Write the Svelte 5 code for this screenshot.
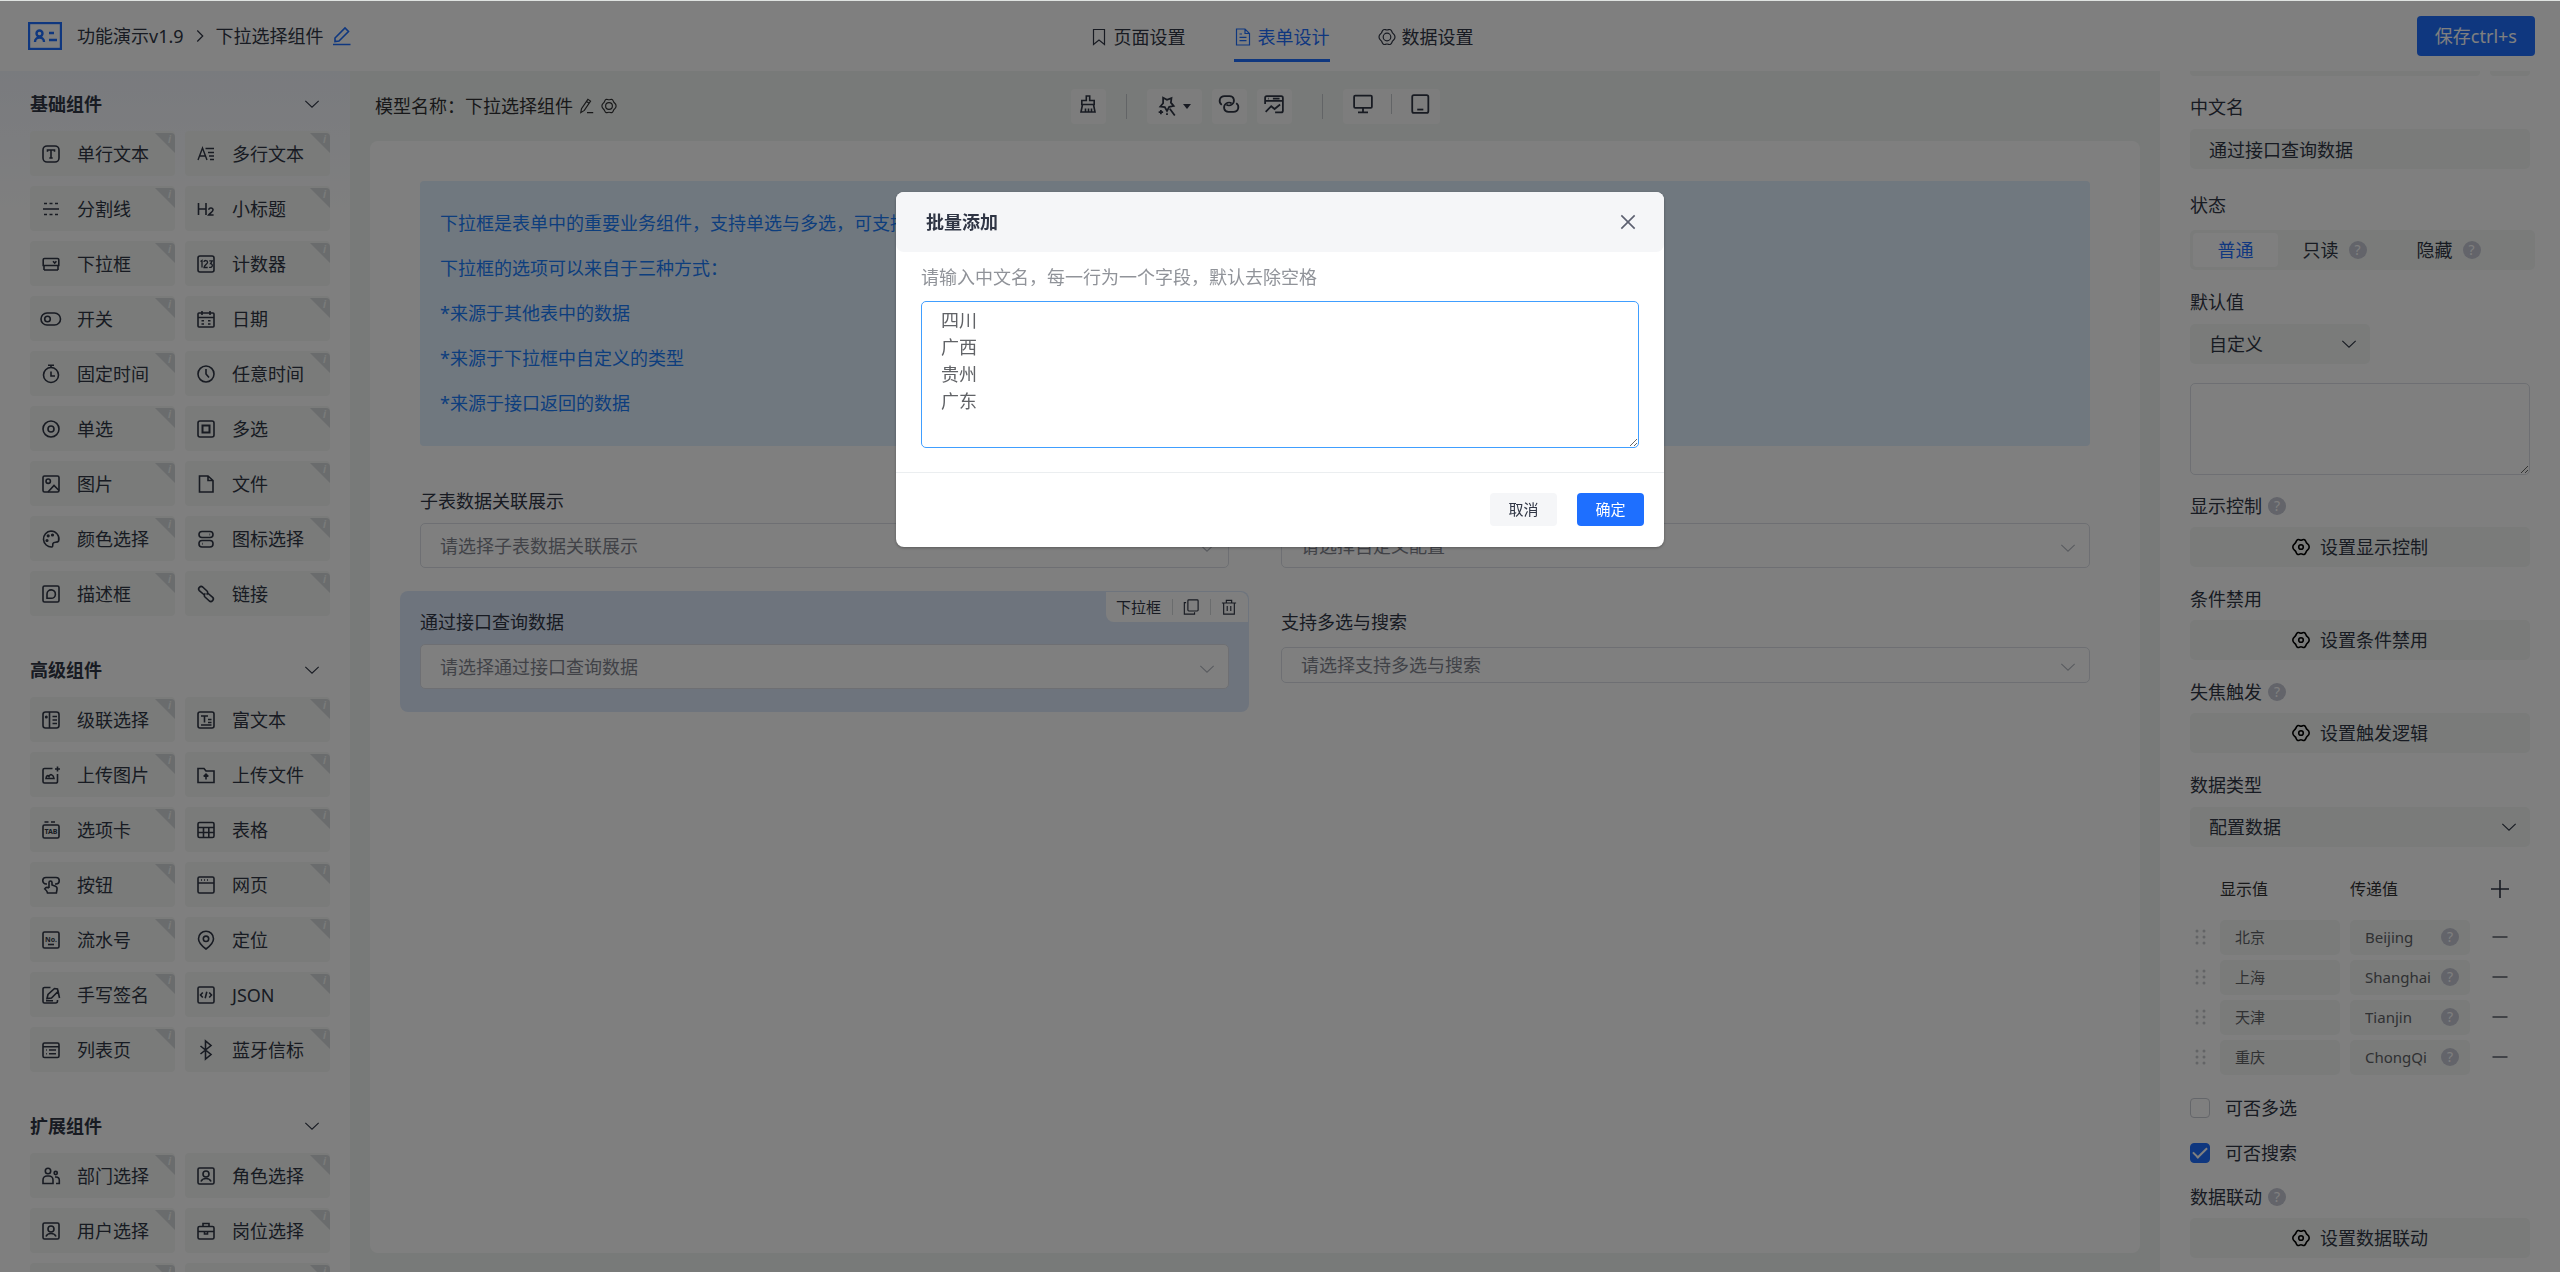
<script lang="ts">
  const icons: Record<string, string> = {
    text: '<rect x="1" y="1" width="16" height="16" rx="4"/><path d="M5.5 6.8V5h7v1.8M9 5v8M7.3 13h3.4"/>',
    multi: '<path d="M1 15 5.5 3 10 15M2.6 11h5.8M8.5 3.5H17M11 7.5h6M12 11h5M13 14.5h4" stroke-width="1.4"/>',
    divider: '<path d="M2 3.5h3M7.5 3.5h3M13 3.5h3M1 9h16M2 14.5h3M7.5 14.5h3M13 14.5h3"/>',
    h2: '<path d="M1.5 3v12M9 3v12M1.5 9H9"/><path d="M11.8 9.8c.2-2.6 4.4-2.4 4.2.2-.1 1.8-3 3-4.4 5h5"/>',
    select: '<path d="M2.500 3.500h13a1.300 1.300 0 0 1 1.300 1.300V10.500H1.200V4.800A1.300 1.300 0 0 1 2.500 3.500zM2 15h14M2 10.500V15M16 10.500V15M11 6.300l1.700 1.700 1.700-1.700"/>',
    counter: '<rect x="1" y="1" width="16" height="16" rx="2"/><path d="M3.500 6.500 5 5.500V12.500M7 7c0-2 3.600-2 3.600.2 0 1.800-3.400 3-3.600 5.300h3.700M12.300 5.800h3l-1.800 2.800c2.800 0 2.400 4.800-1.400 3.700" stroke-width="1.300"/>',
    toggle: '<rect x="-1" y="3" width="19.500" height="12" rx="6"/><circle cx="5.500" cy="9" r="2.800"/>',
    date: '<rect x="1" y="3" width="16" height="14" rx="1"/><path d="M5 1v4M13 1v4M1 7.500h16M4.500 10.800h2.500M11 10.800h2.500M4.500 14h2.500M11 14h2.500"/>',
    timer: '<circle cx="9" cy="10" r="7.500"/><path d="M6 .300h6M9 .500v2M9 6.500V11h4"/>',
    clock: '<circle cx="9" cy="9" r="8"/><path d="M9 4v5l3 3.500"/>',
    radio: '<circle cx="9" cy="9" r="8"/><circle cx="9" cy="9" r="3"/>',
    check: '<rect x="1" y="1" width="16" height="16" rx="2"/><rect x="5.500" y="5.500" width="7" height="7" stroke-width="2"/>',
    image: '<rect x="1" y="1" width="16" height="16" rx="1.500"/><circle cx="6.200" cy="6.200" r="2.200"/><path d="M6 17l6-6.500 5 5"/>',
    file: '<path d="M2.500 1H11l5 4.500V17H2.500zM11 1v4.500h5"/>',
    palette: '<path d="M9 1a8 8 0 1 0 1 16c1.500-.500.300-2.400 1-3.700.900-1.600 4.500-.300 5.600-2.300C18.200 6 14 1 9 1z"/><circle cx="6.200" cy="5.800" r=".8"/><circle cx="5" cy="10.500" r=".8"/><circle cx="10.500" cy="5" r=".8"/>',
    switches: '<rect x="2" y="1.500" width="14" height="6" rx="3"/><rect x="2" y="10.500" width="14" height="6.500" rx="3"/><path d="M12.500 4.500h.6M5 13.700h.6" stroke-width="2"/>',
    desc: '<rect x="1" y="1" width="16" height="16" rx="1.500"/><path d="M5 13.300V9a4.200 4.200 0 1 1 4.200 4.300z"/>',
    link: '<path d="M8 10.500 2.300 5.600C.300 3.500 3.400.300 5.700 2L10 6c1.200 1.200.8 2.800-.4 3.600M10 7.500l5.700 4.900c2 2.100-1.100 5.300-3.400 3.600L8 12c-1.200-1.200-.8-2.800.4-3.600"/>',
    cascade: '<rect x="1" y="1" width="16" height="16" rx="2.500"/><path d="M7.500 1v16M10.500 5.500H15M10.500 9H15M10.500 12.500H15"/><circle cx="4.300" cy="6" r=".7"/>',
    rich: '<rect x="1" y="1" width="16" height="16" rx="2"/><path d="M4 5h7M7.500 5v6.500M11 8.500h3.500M11 11.500h3.500M4 14h10.500"/>',
    upimage: '<path d="M10.500 2.500H2.500A1.500 1.500 0 0 0 1 4v11.500A1.500 1.500 0 0 0 2.500 17H14a1.500 1.500 0 0 0 1.500-1.500V8M15.500.500v5M13 3h5M4 12.500c.300-3 2-3.500 3-2 1.200-3.500 4.500-1.500 5 2z"/>',
    upfile: '<path d="M1 16V2.500h6l2 2.500h8v11.500H1zM9 13.500v-5M6.600 10.500 9 8.200l2.400 2.300"/>',
    tab: '<rect x="1" y="4" width="16" height="13" rx="1.500"/><path d="M2.500 1h4M9 1h4"/><text x="9" y="13" font-size="7">TAB</text>',
    table: '<rect x="1" y="1.500" width="16" height="15" rx="1.500"/><path d="M1 6.500h16M1 11.500h16M6.500 6.500v10M11.800 6.500v10"/>',
    button: '<path d="M5 8H4a3.200 3.200 0 0 1 0-6.500h10a3.200 3.200 0 0 1 0 6.500H13M7 12V6.500c0-2 3-2 3 0V9l3.500 1.300c1.500.6 1.700 2 1.500 3.200l-.6 3.500H5.500c-.3-2-1.500-3-2.800-4.200 1-1.600 2.800-1.600 4.300-.8"/>',
    web: '<rect x="1" y="1" width="16" height="16" rx="1.500"/><path d="M1 7h16M4 4h1M7 4h1M10 4h1"/>',
    serial: '<rect x="1" y="1" width="16" height="16" rx="1.500"/><path d="M6 13.500h6"/><text x="9" y="11" font-size="7">No.</text>',
    pin: '<path d="M9 18S1.500 12.500 1.500 7.700a7.500 7.500 0 0 1 15 0C16.500 12.500 9 18 9 18z"/><circle cx="9" cy="7.800" r="2.700"/>',
    sign: '<path d="M8.500 1.500h-6A1.500 1.500 0 0 0 1 3v12.500A1.500 1.500 0 0 0 2.500 17h11a2 2 0 0 0 2-2v-1M5 12.500l1-4L12.500 2.500l3 .500.500 2.500-6.500 6.500zM16 5l1.500 7M4 14.700h7"/>',
    json: '<rect x="1" y="1" width="16" height="16" rx="1.500"/><path d="M5.800 6.500 3.500 9l2.300 2.500M12.200 6.500 14.500 9l-2.300 2.500M9.800 5.800 8.200 12.200"/>',
    list: '<rect x="1" y="2" width="16" height="14.500" rx="1.500"/><path d="M1 5.800h16M4 9h.8M7 9h7M4 12.800h.8M7 12.800h7"/>',
    bluetooth: '<path d="M3.500 5l10.500 8.500L8.500 18V0L14 4.500 3.500 13"/>',
    dept: '<circle cx="6" cy="4" r="2.700"/><path d="M1 16.500v-3.500a4 4 0 0 1 4-4h2a4 4 0 0 1 4 4v3.500zM13 10h1a3.300 3.300 0 0 1 3.300 3.300v3.200H14"/><circle cx="13.700" cy="6" r="1.600"/>',
    user: '<rect x="1" y="1" width="16" height="16" rx="1.500"/><circle cx="9" cy="7" r="3"/><path d="M4 14.500c1.500-4 8.500-4 10 0"/>',
    post: '<rect x="1" y="4.500" width="16" height="12.500" rx="1.500"/><path d="M6 4.500V1.500h6v3M1 9.500h16M7.500 9.500v2.500h3V9.500"/>',
    gear: '<path d="M5.500 1.700c1.200-.7 2 .3 3.500.3s2.300-1 3.500-.3 1.200 1.900 1.900 3 2.600 1.600 2.600 4.300-1.900 3-2.600 4.300-.7 2.300-1.900 3-2-.3-3.500-.3-2.300 1-3.500.3-1.200-1.900-1.900-3S1 11.700 1 9s1.900-3 2.600-4.300.7-2.300 1.900-3z"/><circle cx="9" cy="9" r="3.800"/>',
    hexgear: '<path d="M5.500 1.700c1.200-.7 2 .6 3.500.6s2.300-1.300 3.500-.6 1.200 1.900 1.900 3 2.800 1.600 2.800 4.300-2.100 3-2.800 4.300-.7 2.300-1.900 3-2-.6-3.500-.6-2.300 1.300-3.500.6-1.200-1.900-1.900-3S.800 11.700.800 9s2.100-3 2.800-4.300.7-2.300 1.900-3z"/><circle cx="9" cy="9" r="2.300"/>',
    bookmark: '<path d="M3.500 1.500h11v15L9 12l-5.500 4.500z"/>',
    doc: '<path d="M2.500 1h8.500l4.500 4.500V17h-13zM11 1v4.500h4.500M5.500 6h2.500M5.500 9.300h7M5.500 12.700h7"/>',
    penline: '<path d="M2 14.500V11L12 1l3.500 3.500L6 14zM0 17.500h17.500"/>',
    pen: '<path d="M2 16.500l.8-4.500L10 1.500l3 2L6 14zM8.500 4l3 2M9 16.500h7"/>',
    brush: '<path d="M7.300 1h3.400v4.500h4.500v4H2.800v-4h4.500zM3.500 9.500 2 17h14l-1.500-7.500M6.500 16.500v-3M9.500 16.500v-3M12.500 16.500v-3"/>',
    wand: '<path d="M5.500 1.500 9 3.500l4-1.500-.5 4L15 9l-4 .8L9 13.500 7 10 3 9.500 5.500 6.500zM11.500 11.500l4.500 6M3.500 12.500v4M1.500 14.500h4M9 15.500v1.500"/>',
    chain: '<path d="M2.500 9.800C-.8 7.500.300 2 5 2h4.500c4.200 0 5.200 5 2.200 7.300-1.700 1.300-4 1.200-4.900.2M15.500 8.200C18.800 10.500 17.700 16 13 16H8.500c-4.200 0-5.200-5-2.200-7.300 1.700-1.300 4-1.200 4.900-.2"/>',
    chart: '<path d="M1 9V3.500A1.500 1.500 0 0 1 2.500 2h13A1.500 1.500 0 0 1 17 3.500V15a1.500 1.500 0 0 1-1.500 1.500H10M1 6.200h16M4 4.200h.5M8 4.200h6M1.500 16l5-5 3 2.500 5-4"/>',
    monitor: '<rect x="1" y="1.500" width="16" height="11" rx="1"/><path d="M9 12.500v4M4.500 16.500h9"/>',
    tablet: '<rect x="2" y="1" width="14.500" height="16" rx="1.500"/><path d="M6.500 14h5.500"/>',
    copy: '<rect x="5.500" y="1" width="11.500" height="12.500" rx="1"/><path d="M3.500 4H1.500v13h11.500v-2"/>',
    trash: '<path d="M1 4.500h16M3 4.500V17h12V4.500M6 4.500V1.500h6v3M7 8v5.500M11 8v5.500"/>',
    down: '<path d="M1.500 5.500 9 12.500l7.500-7"/>',
    right: '<path d="M5.500 2 12.500 9l-7 7"/>',
    close: '<path d="M1.500 1.500l15 15M16.500 1.500l-15 15"/>',
    plus: '<path d="M9 0v18M0 9h18"/>',
    minus: '<path d="M1.500 9h15"/>'
  };

  const groups = [
    {
      title: '基础组件',
      items: [
        ['text', '单行文本'], ['multi', '多行文本'], ['divider', '分割线'], ['h2', '小标题'],
        ['select', '下拉框'], ['counter', '计数器'], ['toggle', '开关'], ['date', '日期'],
        ['timer', '固定时间'], ['clock', '任意时间'], ['radio', '单选'], ['check', '多选'],
        ['image', '图片'], ['file', '文件'], ['palette', '颜色选择'], ['switches', '图标选择'],
        ['desc', '描述框'], ['link', '链接']
      ]
    },
    {
      title: '高级组件',
      items: [
        ['cascade', '级联选择'], ['rich', '富文本'], ['upimage', '上传图片'], ['upfile', '上传文件'],
        ['tab', '选项卡'], ['table', '表格'], ['button', '按钮'], ['web', '网页'],
        ['serial', '流水号'], ['pin', '定位'], ['sign', '手写签名'], ['json', 'JSON'],
        ['list', '列表页'], ['bluetooth', '蓝牙信标']
      ]
    },
    {
      title: '扩展组件',
      items: [['dept', '部门选择'], ['user', '角色选择'], ['user', '用户选择'], ['post', '岗位选择'], ['', ''], ['', '']]
    }
  ];

  const notes = [
    '下拉框是表单中的重要业务组件，支持单选与多选，可支持搜索',
    '下拉框的选项可以来自于三种方式：',
    '*来源于其他表中的数据',
    '*来源于下拉框中自定义的类型',
    '*来源于接口返回的数据'
  ];

  const fields = [
    { id: 'f1', label: '子表数据关联展示' },
    { id: 'f2', label: '自定义配置' },
    { id: 'f3', label: '通过接口查询数据', selected: true },
    { id: 'f4', label: '支持多选与搜索', compact: true }
  ];

  const options = [
    ['北京', 'Beijing'],
    ['上海', 'Shanghai'],
    ['天津', 'Tianjin'],
    ['重庆', 'ChongQi']
  ];

  let batch = $state('四川\n广西\n贵州\n广东');
  let multiple = $state(false);
  let searchable = $state(true);
</script>

{#snippet icon(name: string, cls = '')}
  <svg class="icon {cls}" viewBox="0 0 18 18" aria-hidden="true">{@html icons[name] ?? ''}</svg>
{/snippet}

{#snippet help()}
  <span class="help" role="img" aria-label="帮助">?</span>
{/snippet}

<div class="page">
  <header class="topbar">
    <div class="crumbs">
      <svg class="logo" viewBox="0 0 34 28" aria-hidden="true">
        <rect x="1" y="1" width="32" height="26" />
        <circle cx="11.500" cy="11.500" r="3" />
        <path d="M7 20c0-6 9-6 9 0M21 11h5M21 18h8" />
      </svg>
      <a href="#home">功能演示v1.9</a>
      {@render icon('right', 'sep')}
      <span>下拉选择组件</span>
      <button class="bare blue" aria-label="编辑名称">{@render icon('penline')}</button>
    </div>
    <nav class="tabs">
      <a href="#page">{@render icon('bookmark', 'thin')}页面设置</a>
      <a href="#form" class="active">{@render icon('doc', 'thin')}表单设计</a>
      <a href="#data">{@render icon('gear', 'thin')}数据设置</a>
    </nav>
    <button class="save">保存ctrl+s</button>
  </header>

  <div class="body">
    <aside class="palette">
      {#each groups as group}
        <section>
          <div class="group-head">
            <h2>{group.title}</h2>
            <button class="bare" aria-label="折叠">{@render icon('down', 'chev')}</button>
          </div>
          <div class="tiles">
            {#each group.items as [ico, name]}
              <button class="tile">
                {@render icon(ico)}
                <span>{name}</span>
                <i class="corner">i</i>
              </button>
            {/each}
          </div>
        </section>
      {/each}
    </aside>

    <main class="work">
      <div class="toolbar">
        <div class="model">
          模型名称：下拉选择组件
          <button class="bare" aria-label="编辑模型">{@render icon('pen', 'small')}</button>
          <button class="bare" aria-label="模型设置">{@render icon('gear', 'small')}</button>
        </div>
        <div class="tools">
          <button class="tool" aria-label="清空">{@render icon('brush')}</button>
          <span class="rule"></span>
          <button class="tool wide" aria-label="美化">{@render icon('wand', 'big')}<span class="caret"></span></button>
          <button class="tool" aria-label="关联">{@render icon('chain', 'big')}</button>
          <button class="tool" aria-label="图表">{@render icon('chart', 'big')}</button>
          <span class="rule far"></span>
          <div class="tool devices">
            <button class="bare" aria-label="电脑">{@render icon('monitor', 'big')}</button>
            <span class="split"></span>
            <button class="bare" aria-label="平板">{@render icon('tablet', 'big')}</button>
          </div>
        </div>
      </div>

      <div class="canvas">
        <div class="notes">
          {#each notes as note}<p>{note}</p>{/each}
        </div>
        <div class="grid">
          {#each fields as f}
            <div class="cell" class:selected={f.selected} class:compact={f.compact}>
              <label for={f.id}>{f.label}</label>
              <div class="pick">
                <select id={f.id}><option>请选择{f.label}</option></select>
                {@render icon('down', 'arrow')}
              </div>
              {#if f.selected}
                <div class="cell-tools">
                  <span>下拉框</span>
                  <button class="bare" aria-label="复制">{@render icon('copy')}</button>
                  <button class="bare" aria-label="删除">{@render icon('trash')}</button>
                </div>
              {/if}
            </div>
          {/each}
        </div>
      </div>
    </main>

    <aside class="props">
      <div class="stub"><span></span><span></span></div>

      <div class="field tight">
        <label for="cn">中文名</label>
        <input id="cn" class="box" value="通过接口查询数据" />
      </div>

      <div class="field state">
        <span class="label">状态</span>
        <div class="segment">
          <button class="on">普通</button>
          <button>只读{@render help()}</button>
          <button>隐藏{@render help()}</button>
        </div>
      </div>

      <div class="field">
        <label for="def">默认值</label>
        <div class="pick fill half">
          <select id="def"><option>自定义</option></select>
          {@render icon('down', 'arrow')}
        </div>
        <textarea class="default" aria-label="默认值内容"></textarea>
      </div>

      <div class="field tight">
        <span class="label">显示控制{@render help()}</span>
        <button class="action">{@render icon('hexgear')}设置显示控制</button>
      </div>
      <div class="field close">
        <span class="label">条件禁用</span>
        <button class="action">{@render icon('hexgear')}设置条件禁用</button>
      </div>
      <div class="field close">
        <span class="label">失焦触发{@render help()}</span>
        <button class="action">{@render icon('hexgear')}设置触发逻辑</button>
      </div>

      <div class="field">
        <label for="dtype">数据类型</label>
        <div class="pick fill">
          <select id="dtype"><option>配置数据</option></select>
          {@render icon('down', 'arrow')}
        </div>
      </div>

      <table>
        <thead>
          <tr>
            <th class="grip"></th>
            <th class="col">显示值</th>
            <th class="col">传递值</th>
            <th class="act"><button class="bare" aria-label="添加">{@render icon('plus')}</button></th>
          </tr>
        </thead>
        <tbody>
          {#each options as [name, value]}
            <tr>
              <td class="grip">
                <svg class="dots" viewBox="0 0 12 16" aria-hidden="true">
                  <path d="M3 2h0M10 2h0M3 8h0M10 8h0M3 14h0M10 14h0" />
                </svg>
              </td>
              <td class="col"><div class="opt"><input aria-label="显示值" value={name} /></div></td>
              <td class="col"><div class="opt"><input aria-label="传递值" {value} />{@render help()}</div></td>
              <td class="act"><button class="bare" aria-label="移除">{@render icon('minus', 'thin')}</button></td>
            </tr>
          {/each}
        </tbody>
      </table>

      <label class="tick"><input type="checkbox" bind:checked={multiple} />可否多选</label>
      <label class="tick"><input type="checkbox" bind:checked={searchable} />可否搜索</label>

      <div class="field tight">
        <span class="label">数据联动{@render help()}</span>
        <button class="action">{@render icon('hexgear')}设置数据联动</button>
      </div>
    </aside>
  </div>
</div>

<div class="overlay">
  <div class="dialog" role="dialog" aria-modal="true" aria-labelledby="dlg-title">
    <div class="dialog-head">
      <h3 id="dlg-title">批量添加</h3>
      <button class="bare" aria-label="关闭">{@render icon('close')}</button>
    </div>
    <div class="dialog-body">
      <label for="batch">请输入中文名，每一行为一个字段，默认去除空格</label>
      <textarea id="batch" bind:value={batch}></textarea>
    </div>
    <div class="dialog-foot">
      <button>取消</button>
      <button class="primary">确定</button>
    </div>
  </div>
</div>

<style>
  :global(body) {
    font-family: 'Noto Sans', 'Noto Sans CJK SC', sans-serif;
    font-size: 18px;
    line-height: 24px;
    color: #303645;
  }

  .page,
  .overlay,
  .page :global(*),
  .overlay :global(*) {
    box-sizing: border-box;
  }

  .page {
    display: flex;
    flex-direction: column;
    height: 100vh;
    overflow: hidden;
    border-top: 1px solid #dfe3e1;
    background: #fff;
  }

  button,
  input,
  select,
  textarea {
    font: inherit;
    color: inherit;
    border: 0;
    outline: 0;
    margin: 0;
    padding: 0;
  }

  a {
    color: inherit;
    text-decoration: none;
  }

  .bare {
    display: flex;
    background: none;
  }

  .icon {
    flex: none;
    width: 18px;
    height: 18px;
    fill: none;
    stroke: currentColor;
    stroke-width: 1.6;
    overflow: visible;
  }

  .icon :global(text) {
    fill: currentColor;
    stroke: none;
    font-weight: 700;
    text-anchor: middle;
  }

  .thin {
    stroke-width: 1.2;
  }

  .small {
    width: 16px;
    height: 16px;
    stroke-width: 1.3;
  }

  .big {
    width: 20px;
    height: 20px;
  }

  .chev {
    width: 16px;
    height: 16px;
    stroke-width: 1.3;
  }

  .help {
    flex: none;
    width: 18px;
    height: 18px;
    border-radius: 9px;
    background: #c6c8d4;
    color: #fff;
    font-size: 14px;
    line-height: 18px;
    text-align: center;
  }

  /* top bar */
  .topbar {
    flex: none;
    display: grid;
    grid-template-columns: 1fr auto 1fr;
    align-items: center;
    height: 70px;
    padding: 0 25px 0 28px;
  }

  .crumbs {
    display: flex;
    align-items: center;
    gap: 9px;
  }

  .logo {
    width: 34px;
    height: 28px;
    margin-right: 6px;
    fill: none;
    stroke: #1e6fff;
    stroke-width: 2.400;
  }

  .sep {
    width: 14px;
    height: 14px;
  }

  .blue {
    color: #1e6fff;
  }

  .tabs {
    display: flex;
    gap: 48px;
    align-self: stretch;
    align-items: center;
    padding-top: 2px;
  }

  .tabs a {
    display: flex;
    align-items: center;
    gap: 6px;
    height: 50px;
    border-bottom: 3px solid transparent;
    border-top: 3px solid transparent;
  }

  .tabs .active {
    color: #1e6fff;
    border-bottom-color: #1e6fff;
  }

  .save {
    justify-self: end;
    height: 40px;
    padding: 0 18px;
    border-radius: 4px;
    background: #1e6fff;
    color: #fff;
  }

  .body {
    flex: 1;
    min-height: 0;
    display: grid;
    grid-template-columns: 350px 1fr 400px;
  }

  /* component palette */
  .palette {
    overflow: hidden;
    padding: 13px 20px 0 30px;
    background: linear-gradient(#f3f6fd, #fff 150px);
  }

  section {
    margin-bottom: 34px;
  }

  .group-head {
    display: flex;
    align-items: center;
    justify-content: space-between;
    height: 40px;
    margin-bottom: 7px;
    padding-right: 10px;
  }

  h2,
  h3 {
    margin: 0;
    font-size: 18px;
    font-weight: 700;
  }

  .tiles {
    display: grid;
    grid-template-columns: 1fr 1fr;
    gap: 10px;
  }

  .tile {
    position: relative;
    display: flex;
    align-items: center;
    gap: 17px;
    height: 45px;
    padding-left: 12px;
    border-radius: 4px;
    background: #f4f7f5;
    text-align: left;
    white-space: nowrap;
  }

  .corner {
    position: absolute;
    top: 2px;
    right: 0;
    width: 20px;
    height: 20px;
    padding-right: 4px;
    border-top-right-radius: 4px;
    background: #d5d8da;
    clip-path: polygon(0 0, 100% 0, 100% 100%);
    color: #f4f7f5;
    font-size: 10px;
    font-weight: 700;
    line-height: 13px;
    text-align: right;
  }

  /* work area */
  .work {
    display: flex;
    flex-direction: column;
    min-width: 0;
    padding: 0 20px 19px;
    background: #f1f5f2;
  }

  .toolbar {
    flex: none;
    display: grid;
    grid-template-columns: 1fr auto 1fr;
    align-items: center;
    height: 70px;
  }

  .model {
    display: flex;
    align-items: center;
    gap: 6px;
    padding-left: 5px;
    color: #303133;
  }

  .tools {
    display: flex;
    align-items: center;
    gap: 10px;
  }

  .tool {
    display: flex;
    justify-content: center;
    align-items: center;
    gap: 6px;
    width: 35px;
    height: 35px;
    padding-bottom: 4px;
    border-radius: 4px;
    background: #fafbfa;
  }

  .wide {
    width: 55px;
    padding-bottom: 0;
  }

  .caret {
    border: 4px solid transparent;
    border-top: 5px solid currentColor;
    border-bottom: 0;
  }

  .rule {
    width: 1px;
    height: 25px;
    margin: 0 10px;
    background: #c4c8cc;
  }

  .far {
    margin-left: 20px;
  }

  .devices {
    width: auto;
    gap: 18px;
    padding-left: 10px;
    padding-right: 10px;
  }

  .split {
    width: 1px;
    height: 20px;
    background: #c4c8cc;
  }

  .canvas {
    flex: 1;
    min-height: 0;
    padding: 40px 30px;
    border-radius: 8px;
    background: #fff;
  }

  .notes {
    margin: 0 20px 24px;
    padding: 20px;
    border-radius: 4px;
    background: #e0f0fe;
    color: #1a7cfa;
  }

  .notes p {
    margin: 0;
    line-height: 45px;
  }

  .grid {
    display: grid;
    grid-template-columns: 1fr 1fr;
    column-gap: 12px;
  }

  .cell {
    position: relative;
    height: 121px;
    padding: 19px 20px;
    border-radius: 8px;
  }

  .cell label {
    display: block;
    margin-bottom: 10px;
  }

  .pick {
    position: relative;
    display: flex;
    align-items: center;
    height: 45px;
    border: 1px solid #dcdfe6;
    border-radius: 5px;
    background: #fff;
    color: #82858f;
  }

  .compact .pick {
    height: 36px;
    margin-top: 13px;
  }

  .pick select {
    flex: 1;
    height: 100%;
    padding: 0 40px 0 19px;
    appearance: none;
    background: none;
  }

  .arrow {
    position: absolute;
    right: 13px;
    width: 16px;
    height: 16px;
    stroke-width: 1.3;
    pointer-events: none;
  }

  .cell .arrow {
    color: #b4b8c0;
    margin-top: 4px;
  }

  .selected {
    background: #dde9fb;
  }

  .cell-tools {
    position: absolute;
    top: 1px;
    right: 1px;
    display: flex;
    align-items: center;
    gap: 11px;
    height: 30px;
    padding: 0 11px 0 10px;
    border-radius: 0 8px 0 8px;
    background: #fff;
    font-size: 15px;
  }

  .cell-tools .bare {
    padding-left: 10px;
    border-left: 1px solid #d5d8da;
  }

  .cell-tools .icon {
    width: 16px;
    height: 16px;
    stroke-width: 1.3;
  }

  /* property panel */
  .props {
    overflow: hidden;
    padding: 0 30px;
    background: #fff;
  }

  .stub {
    display: grid;
    grid-template-columns: 1fr 40px;
    gap: 10px;
  }

  .stub span {
    height: 5px;
    border-radius: 0 0 4px 4px;
    background: #f4f7f5;
  }

  .field {
    margin-top: 20px;
  }

  .field > label,
  .label {
    display: flex;
    align-items: center;
    gap: 6px;
    height: 24px;
    margin-bottom: 10px;
  }

  .state {
    margin-top: 24px;
    margin-right: -5px;
  }

  .state .label {
    margin-bottom: 13px;
  }

  .tight {
    margin-top: 19px;
  }

  .tight .label,
  .close .label {
    margin-bottom: 9px;
  }

  .box {
    width: 100%;
    height: 40px;
    padding: 0 19px;
    border-radius: 5px;
    background: #f4f7f5;
  }

  .fill {
    height: 40px;
    border: 0;
    background: #f4f7f5;
    color: inherit;
  }

  .half {
    width: 180px;
  }

  .segment {
    display: grid;
    grid-template-columns: 85px 113px 115px;
    height: 40px;
    padding: 3px;
    border-radius: 5px;
    background: #f4f7f5;
  }

  .segment button {
    display: flex;
    align-items: center;
    justify-content: center;
    gap: 10px;
    border-radius: 4px;
    background: none;
  }

  .segment .on {
    background: #fff;
    color: #1e6fff;
  }

  .default {
    display: block;
    width: 100%;
    height: 92px;
    margin-top: 19px;
    border: 1px solid #dcdfe6;
    border-radius: 5px;
    background: #fff;
    resize: vertical;
  }

  .action {
    display: flex;
    align-items: center;
    justify-content: center;
    gap: 10px;
    width: 100%;
    height: 40px;
    border-radius: 5px;
    background: #f4f7f5;
  }

  .action .icon {
    color: #000;
  }

  table {
    width: 100%;
    margin-top: 25px;
    table-layout: fixed;
    border-collapse: collapse;
    font-size: 16px;
  }

  th,
  td {
    height: 40px;
    padding: 0;
    font-weight: 400;
    text-align: left;
    color: #303133;
  }

  th {
    height: 45px;
    padding-bottom: 11px;
  }

  .grip {
    width: 30px;
  }

  .col {
    width: 130px;
    padding-right: 10px;
  }

  .act .bare {
    margin-left: 11px;
    color: #303645;
  }

  .dots {
    display: block;
    width: 12px;
    height: 16px;
    margin-left: 4px;
    stroke: #c6c8cc;
    stroke-width: 3;
    stroke-linecap: round;
  }

  .opt {
    display: flex;
    align-items: center;
    gap: 9px;
    height: 35px;
    padding: 0 11px 0 15px;
    border-radius: 5px;
    background: #f4f7f5;
    color: #606266;
    font-size: 15px;
  }

  .opt input {
    flex: 1;
    min-width: 0;
    background: none;
  }

  .tick {
    display: flex;
    align-items: center;
    gap: 15px;
    height: 45px;
  }

  table + .tick {
    margin-top: 8px;
  }

  .tick input {
    display: flex;
    align-items: center;
    justify-content: center;
    width: 20px;
    height: 20px;
    border: 1px solid #c9ccd4;
    border-radius: 4px;
    background: #fff;
    appearance: none;
  }

  .tick input:checked {
    border-color: #1e6fff;
    background: #1e6fff;
  }

  .tick input:checked::before {
    content: '';
    width: 12px;
    height: 6px;
    margin-bottom: 4px;
    border: 2px solid #fff;
    border-top: 0;
    border-right: 0;
    transform: rotate(-45deg);
  }

  .tick + .field {
    margin-top: 10px;
  }

  /* dialog */
  .overlay {
    position: fixed;
    inset: 1px 0 0;
    background: rgba(0, 0, 0, 0.5);
  }

  .dialog {
    width: 30%;
    margin: 15vh auto 0;
    border-radius: 8px;
    background: #fff;
    box-shadow: 0 1px 3px rgba(0, 0, 0, 0.3);
  }

  .dialog-head {
    display: flex;
    align-items: center;
    justify-content: space-between;
    height: 60px;
    padding: 0 28px 0 30px;
    border-radius: 8px;
    background: #f5f6f8;
  }

  .dialog-head .icon {
    width: 16px;
    height: 16px;
    stroke-width: 1.8;
    color: #5c6070;
  }

  .dialog-body {
    padding: 13px 25px 24px;
  }

  .dialog-body label {
    display: block;
    color: #909399;
  }

  .dialog-body textarea {
    display: block;
    width: 100%;
    height: 147px;
    margin-top: 12px;
    padding: 5px 19px;
    border: 1px solid #409eff;
    border-radius: 5px;
    background: #fff;
    color: #606266;
    line-height: 27px;
    resize: vertical;
  }

  .dialog-foot {
    display: flex;
    justify-content: flex-end;
    gap: 20px;
    padding: 20px 20px 21px;
    border-top: 1px solid #ebeef0;
  }

  .dialog-foot button {
    width: 67px;
    height: 33px;
    border-radius: 4px;
    background: #f5f6f8;
    font-size: 15px;
  }

  .dialog-foot .primary {
    background: #1e6fff;
    color: #fff;
  }
</style>
